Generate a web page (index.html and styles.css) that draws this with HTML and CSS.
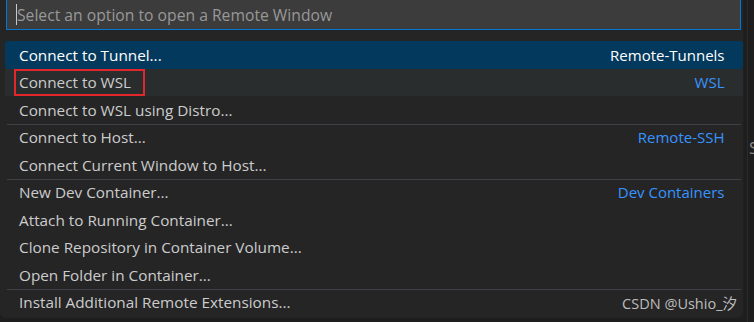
FILE: index.html
```html
<!DOCTYPE html>
<html>
<head>
    <title>Remote Window</title>
    <link rel="stylesheet" href="styles.css">
</head>
<body>
    <div class="backdrop">
        <span class="behind-glyph">S</span>
    </div>

    <div class="quick-input">
        <div class="input-box">
            <span class="caret"></span>
            <span class="placeholder">Select an option to open a Remote Window</span>
        </div>

        <div class="list">
            <div class="row selected">
                <span class="label">Connect to Tunnel...</span>
                <span class="desc">Remote-Tunnels</span>
            </div>
            <div class="row hover">
                <span class="label marked">Connect to WSL</span>
                <span class="desc">WSL</span>
            </div>
            <div class="row">
                <span class="label">Connect to WSL using Distro...</span>
            </div>
            <div class="row group">
                <span class="label">Connect to Host...</span>
                <span class="desc">Remote-SSH</span>
            </div>
            <div class="row">
                <span class="label">Connect Current Window to Host...</span>
            </div>
            <div class="row group">
                <span class="label">New Dev Container...</span>
                <span class="desc">Dev Containers</span>
            </div>
            <div class="row">
                <span class="label">Attach to Running Container...</span>
            </div>
            <div class="row">
                <span class="label">Clone Repository in Container Volume...</span>
            </div>
            <div class="row">
                <span class="label">Open Folder in Container...</span>
            </div>
            <div class="row group">
                <span class="label">Install Additional Remote Extensions...</span>
            </div>
        </div>

        <!-- watermark from the original screenshot -->
        <div class="watermark">CSDN @Ushio_汐</div>
    </div>
</body>
</html>
```

FILE: styles.css
```css
body {
    margin: 0;
    width: 754px;
    height: 322px;
    overflow: hidden;
    background-color: #1e1e1e;
    font-family: "Open Sans", "Noto Sans CJK SC", sans-serif;
    font-size: 15.3px;
    color: #cccccc;
    position: relative;
}

/* editor strip visible on the right of the picker */
.backdrop {
    position: absolute;
    top: 0;
    left: 747px;
    width: 7px;
    height: 322px;
    border-left: 1px solid #2b2b2b;
    overflow: hidden;
}

.behind-glyph {
    position: absolute;
    top: 136px;
    left: 1px;
    font-size: 17px;
    color: #8a8a8a;
}

.quick-input {
    position: relative;
    width: 743px;
    height: 318px;
    background-color: #252526;
    border-radius: 0 0 6px 6px;
    box-shadow: 1px 0 0 #202020;
}

.input-box {
    position: relative;
    top: -3px;
    margin-left: 6px;
    width: 735px;
    height: 33px;
    box-sizing: border-box;
    background-color: #3c3c3c;
    border: 1px solid #0078d4;
    display: flex;
    align-items: center;
    padding-left: 9px;
}

.caret {
    width: 1px;
    height: 21px;
    margin-top: 2px;
    background-color: #c8c8c8;
}

.placeholder {
    color: #989898;
    font-size: 15.7px;
    margin-top: 3px;
}

.list {
    margin-top: 8px;
    margin-left: 5px;
    width: 737.5px;
}

.row {
    position: relative;
    height: 27.5px;
    display: flex;
    align-items: center;
    justify-content: space-between;
    padding: 0 18px 0 14px;
    box-sizing: border-box;
}

.row.selected {
    background-color: #04395e;
    color: #ffffff;
    border-radius: 3px;
}

.row.hover {
    background-color: #2a2d2e;
}

.row.group::before {
    content: "";
    position: absolute;
    top: 0;
    left: 2px;
    right: 2px;
    height: 1px;
    background-color: #3f3f46;
}

.desc {
    color: #3794ff;
    font-size: 15px;
}

.row.selected .desc {
    color: #ffffff;
}

.label.marked {
    position: relative;
}

/* red annotation box */
.label.marked::after {
    content: "";
    position: absolute;
    left: -5px;
    right: -14px;
    top: -3px;
    bottom: -4px;
    border: 2px solid #e3262b;
}

.watermark {
    position: absolute;
    right: 6px;
    bottom: 5px;
    font-size: 14.5px;
    color: #bdbdbd;
}
```
